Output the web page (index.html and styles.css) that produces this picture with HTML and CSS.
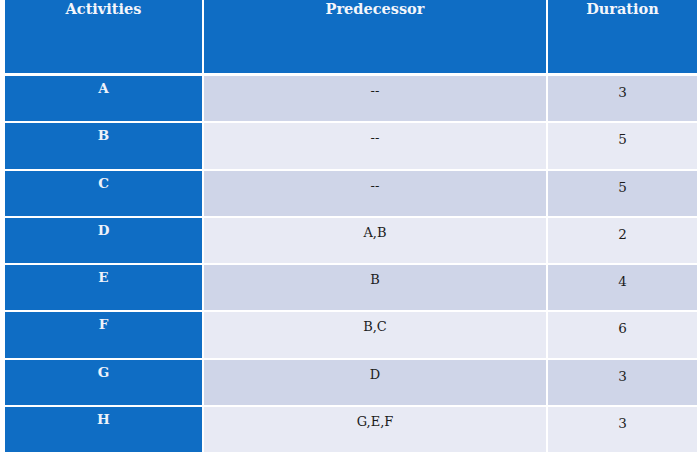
FILE: index.html
```html
<!DOCTYPE html>
<html>
<head>
<meta charset="utf-8">
<link rel="stylesheet" href="styles.css">
</head>
<body>
<div class="table">
  <div class="cell head">Activities</div>
  <div class="cell head">Predecessor</div>
  <div class="cell head">Duration</div>

  <div class="cell act">A</div>
  <div class="cell odd">--</div>
  <div class="cell odd num">3</div>

  <div class="cell act">B</div>
  <div class="cell even">--</div>
  <div class="cell even num">5</div>

  <div class="cell act">C</div>
  <div class="cell odd">--</div>
  <div class="cell odd num">5</div>

  <div class="cell act">D</div>
  <div class="cell even">A,B</div>
  <div class="cell even num">2</div>

  <div class="cell act">E</div>
  <div class="cell odd">B</div>
  <div class="cell odd num">4</div>

  <div class="cell act">F</div>
  <div class="cell even">B,C</div>
  <div class="cell even num">6</div>

  <div class="cell act">G</div>
  <div class="cell odd">D</div>
  <div class="cell odd num">3</div>

  <div class="cell act">H</div>
  <div class="cell even">G,E,F</div>
  <div class="cell even num">3</div>
</div>
</body>
</html>
```

FILE: styles.css
```css
html, body {
  margin: 0;
  padding: 0;
  background: #ffffff;
}

body {
  font-family: "DejaVu Serif", "Liberation Serif", serif;
}

.table {
  display: grid;
  grid-template-columns: 197px 342px 149px;
  grid-template-rows: 74px repeat(8, 45.25px);
  column-gap: 2px;
  row-gap: 2px;
  margin-left: 5px;
  width: 692px;
}

.table .head {
  margin-bottom: 1px;
}

.cell {
  text-align: center;
  box-sizing: border-box;
}

.head {
  background: #0f6dc4;
  color: #f4f6fb;
  font-weight: bold;
  font-size: 14.5px;
  line-height: 16px;
  padding-top: 1px;
}

.act {
  background: #0f6dc4;
  color: #eef2fa;
  font-weight: bold;
  font-size: 13.5px;
  line-height: 16px;
  padding-top: 4px;
}

.odd {
  background: #cfd5e8;
  color: #1c1c1c;
  font-size: 13px;
  line-height: 16px;
  padding-top: 7px;
}

.even {
  background: #e8eaf4;
  color: #1c1c1c;
  font-size: 13px;
  line-height: 16px;
  padding-top: 7px;
}

.num {
  font-size: 13.5px;
  padding-top: 8px;
}
```
